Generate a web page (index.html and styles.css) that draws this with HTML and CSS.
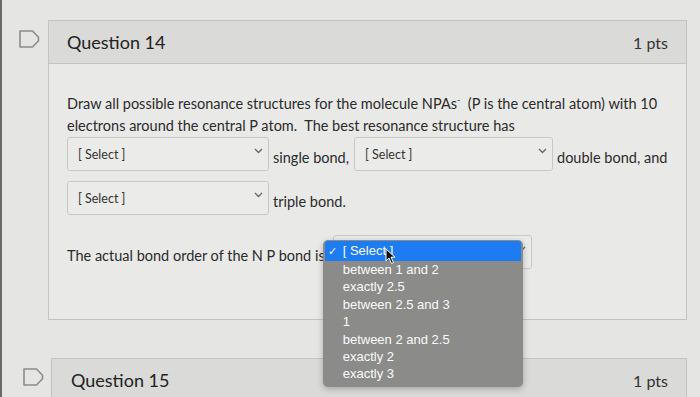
FILE: index.html
```html
<!DOCTYPE html>
<html lang="en">
<head>
    <meta charset="UTF-8">
    <title>Quiz</title>
    <link rel="stylesheet" href="styles.css">
</head>
<body>
    <div class="page">
        <div class="question">
            <div class="flag-col">
                <svg class="flag" width="21" height="18" viewBox="0 0 21 18"><path d="M1 1 H13.5 L19.5 7.2 V10.8 L13.5 17 H1 Z" fill="none" stroke="#8c8c8c" stroke-width="1.6" stroke-linejoin="round"/></svg>
            </div>
            <div class="card">
                <div class="card-header">
                    <h2>Question 14</h2>
                    <span class="pts">1 pts</span>
                </div>
                <div class="card-body">
                    <p class="prompt">Draw all possible resonance structures for the molecule NPAs<sup>-</sup> &nbsp;(P is the central atom) with 10 electrons around the central P atom.&nbsp; The best resonance structure has</p>
                    <div class="answer-row">
                        <div class="select"><span>[ Select ]</span><svg class="chev" width="9" height="6" viewBox="0 0 9 6"><path d="M1 1 L4.5 4.5 L8 1" fill="none" stroke="#666" stroke-width="1.3"/></svg></div>
                        <span>single bond,</span>
                        <div class="select narrow"><span>[ Select ]</span><svg class="chev" width="9" height="6" viewBox="0 0 9 6"><path d="M1 1 L4.5 4.5 L8 1" fill="none" stroke="#666" stroke-width="1.3"/></svg></div>
                        <span>double bond, and</span>
                    </div>
                    <div class="answer-row">
                        <div class="select"><span>[ Select ]</span><svg class="chev" width="9" height="6" viewBox="0 0 9 6"><path d="M1 1 L4.5 4.5 L8 1" fill="none" stroke="#666" stroke-width="1.3"/></svg></div>
                        <span>triple bond.</span>
                    </div>
                    <div class="answer-row order-row">
                        <span class="order-text">The actual bond order of the N P bond is</span>
                        <div class="select-wrap">
                            <div class="select narrow"><span>[ Select ]</span><svg class="chev" width="9" height="6" viewBox="0 0 9 6"><path d="M1 1 L4.5 4.5 L8 1" fill="none" stroke="#666" stroke-width="1.3"/></svg></div>
                            <ul class="menu">
                                <li class="active"><span class="check">&#10003;</span>[ Select ]</li>
                                <li>between 1 and 2</li>
                                <li>exactly 2.5</li>
                                <li>between 2.5 and 3</li>
                                <li>1</li>
                                <li>between 2 and 2.5</li>
                                <li>exactly 2</li>
                                <li>exactly 3</li>
                            </ul>
                            <svg class="cursor" width="12" height="17" viewBox="0 0 12 17"><path d="M1 1 V13 L4 10 L6.5 15.5 L8.5 14.6 L6 9.2 H10 Z" fill="#111" stroke="#fff" stroke-width="1"/></svg>
                        </div>
                    </div>
                </div>
            </div>
        </div>

        <div class="question second">
            <div class="flag-col">
                <svg class="flag" width="21" height="18" viewBox="0 0 21 18"><path d="M1 1 H13.5 L19.5 7.2 V10.8 L13.5 17 H1 Z" fill="none" stroke="#8c8c8c" stroke-width="1.6" stroke-linejoin="round"/></svg>
            </div>
            <div class="card">
                <div class="card-header">
                    <h2>Question 15</h2>
                    <span class="pts">1 pts</span>
                </div>
            </div>
        </div>
    </div>
</body>
</html>
```

FILE: styles.css
```css
* {
    margin: 0;
    padding: 0;
    box-sizing: border-box;
}

body {
    font-family: 'Lato', 'Liberation Sans', sans-serif;
    background-color: #e5e5e3;
    color: #2b2b2b;
    height: 397px;
    overflow: hidden;
}

.page {
    padding-top: 20px;
    border-left: 2px solid #6a6a6a;
    min-height: 397px;
}

.question {
    display: flex;
    margin-right: 13px;
}

.question.second {
    margin-top: 38px;
}

.flag-col {
    width: 46px;
    flex-shrink: 0;
    padding: 10px 0 0 17px;
}

.second .flag-col {
    padding-left: 21px;
    padding-top: 10px;
}

.flag {
    display: block;
}

.card {
    flex: 1;
    border: 1px solid #c3c3c1;
    background-color: #e9e9e7;
}

.second .card {
    margin-left: 3px;
}

.card-header {
    height: 43px;
    display: flex;
    align-items: center;
    justify-content: space-between;
    padding: 0 18px 0 18px;
    background-color: #dadad8;
    border-bottom: 1px solid #c3c3c1;
}

.second .card-header {
    padding-left: 19px;
}

.card-header h2 {
    font-size: 18px;
    font-weight: 400;
    color: #222;
}

.pts {
    font-size: 16px;
    color: #333;
}

.card-body {
    padding: 25px 10px 50px 18px;
}

.prompt {
    font-size: 14.5px;
    line-height: 22px;
    color: #2b2b2b;
}

.prompt sup {
    font-size: 9px;
    vertical-align: 6px;
}

.answer-row {
    display: flex;
    align-items: center;
    gap: 4px;
    font-size: 14.5px;
    margin-bottom: 10px;
    white-space: nowrap;
}

.answer-row > span {
    margin-top: 6px;
}

.order-row {
    margin-top: 20px;
    margin-bottom: 0;
    gap: 3px;
}

.order-text {
    margin-top: 8px;
}

.select {
    flex-shrink: 0;
    width: 202px;
    height: 34px;
    border: 1px solid #c8c8c6;
    border-radius: 3px;
    background-color: #ebebe9;
    display: flex;
    align-items: center;
    justify-content: space-between;
    padding: 0 5px 0 10px;
    font-size: 12.5px;
    color: #333;
}

.select.narrow {
    width: 199px;
    margin-left: 1px;
}

.chev {
    margin-top: -6px;
}

.select-wrap {
    position: relative;
    margin-left: 4px;
}

.menu {
    position: absolute;
    left: -9px;
    top: 5px;
    width: 200px;
    list-style: none;
    background-color: #8b8b8a;
    border-radius: 5px;
    padding: 1px 2px 4px 2px;
    font-family: 'Liberation Sans', Arial, sans-serif;
    font-size: 13px;
    color: #fafafa;
    box-shadow: 0 2px 6px rgba(0, 0, 0, 0.25);
}

.menu li {
    height: 17.4px;
    line-height: 17.4px;
    padding-left: 18px;
    position: relative;
}

.menu li.active {
    height: 20px;
    line-height: 20px;
    background-color: #1d7cf2;
    border-radius: 3px 3px 0 0;
}

.check {
    position: absolute;
    left: 3px;
    font-size: 11px;
}

.cursor {
    position: absolute;
    left: 53px;
    top: 13px;
}
```
